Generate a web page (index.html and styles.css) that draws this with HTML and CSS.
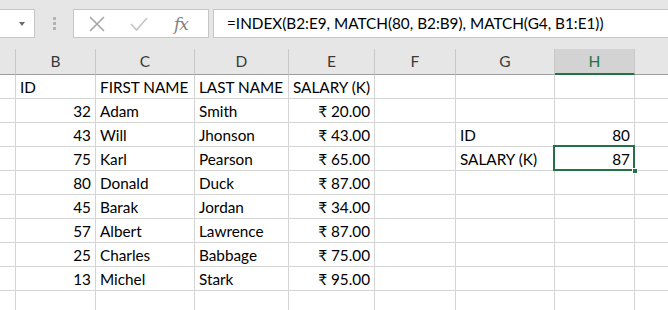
FILE: index.html
```html
<!DOCTYPE html>
<html>
<head>
<meta charset="utf-8">
<link rel="stylesheet" href="styles.css">
</head>
<body>
<div class="toolbar">
  <div class="namebox"><span class="arrow"></span></div>
  <div class="grip"><span></span><span></span><span></span></div>
  <div class="buttons">
    <svg class="ico" width="20" height="20" viewBox="0 0 20 20"><path d="M3 3 L17 17 M17 3 L3 17" stroke="#a6a6a6" stroke-width="1.6" fill="none"/></svg>
    <svg class="ico" width="20" height="20" viewBox="0 0 20 20"><path d="M2 10 L7.5 16 L18 4" stroke="#c4c4c4" stroke-width="1.6" fill="none"/></svg>
    <span class="fx">fx</span>
  </div>
  <div class="formula">=INDEX(B2:E9, MATCH(80, B2:B9), MATCH(G4, B1:E1))</div>
</div>
<div class="sheet">
  <div class="hd"></div><div class="hd">B</div><div class="hd">C</div><div class="hd">D</div><div class="hd">E</div><div class="hd">F</div><div class="hd">G</div><div class="hd sel">H</div><div class="hd last"></div>

  <div class="c"></div><div class="c">ID</div><div class="c">FIRST NAME</div><div class="c">LAST NAME</div><div class="c">SALARY (K)</div><div class="c"></div><div class="c"></div><div class="c"></div><div class="c last"></div>

  <div class="c"></div><div class="c r">32</div><div class="c">Adam</div><div class="c">Smith</div><div class="c r">₹ 20.00</div><div class="c"></div><div class="c"></div><div class="c"></div><div class="c last"></div>

  <div class="c"></div><div class="c r">43</div><div class="c">Will</div><div class="c">Jhonson</div><div class="c r">₹ 43.00</div><div class="c"></div><div class="c">ID</div><div class="c r">80</div><div class="c last"></div>

  <div class="c"></div><div class="c r">75</div><div class="c">Karl</div><div class="c">Pearson</div><div class="c r">₹ 65.00</div><div class="c"></div><div class="c">SALARY (K)</div><div class="c r active">87<span class="handle"></span></div><div class="c last"></div>

  <div class="c"></div><div class="c r">80</div><div class="c">Donald</div><div class="c">Duck</div><div class="c r">₹ 87.00</div><div class="c"></div><div class="c"></div><div class="c"></div><div class="c last"></div>

  <div class="c"></div><div class="c r">45</div><div class="c">Barak</div><div class="c">Jordan</div><div class="c r">₹ 34.00</div><div class="c"></div><div class="c"></div><div class="c"></div><div class="c last"></div>

  <div class="c"></div><div class="c r">57</div><div class="c">Albert</div><div class="c">Lawrence</div><div class="c r">₹ 87.00</div><div class="c"></div><div class="c"></div><div class="c"></div><div class="c last"></div>

  <div class="c"></div><div class="c r">25</div><div class="c">Charles</div><div class="c">Babbage</div><div class="c r">₹ 75.00</div><div class="c"></div><div class="c"></div><div class="c"></div><div class="c last"></div>

  <div class="c"></div><div class="c r">13</div><div class="c">Michel</div><div class="c">Stark</div><div class="c r">₹ 95.00</div><div class="c"></div><div class="c"></div><div class="c"></div><div class="c last"></div>

  <div class="c"></div><div class="c"></div><div class="c"></div><div class="c"></div><div class="c"></div><div class="c"></div><div class="c"></div><div class="c"></div><div class="c last"></div>
</div>
</body>
</html>
```
FILE: styles.css
```css
* { box-sizing: border-box; }
html, body { margin: 0; padding: 0; background: #ffffff; }
body {
  width: 668px;
  height: 310px;
  overflow: hidden;
  font-family: Lato, "Noto Sans", "DejaVu Sans", sans-serif;
  font-size: 15.3px;
  color: #000;
}
.toolbar {
  height: 50px;
  background: #e6e6e6;
  display: flex;
  align-items: flex-start;
  padding-top: 9px;
}
.namebox {
  width: 35px;
  height: 29px;
  background: #fff;
  border: 1px solid #c6c6c6;
  border-left: none;
  position: relative;
}
.arrow {
  position: absolute;
  left: 19px;
  top: 12px;
  width: 0; height: 0;
  border-left: 3.5px solid transparent;
  border-right: 3.5px solid transparent;
  border-top: 4px solid #6b6b6b;
}
.grip {
  width: 38px;
  height: 29px;
  display: flex;
  flex-direction: column;
  align-items: center;
  justify-content: center;
  gap: 2px;
}
.grip span {
  width: 3px; height: 3px; background: #b4b4b4;
}
.buttons {
  width: 136px;
  height: 29px;
  background: #fff;
  border: 1px solid #c6c6c6;
  display: flex;
  align-items: center;
  padding-left: 13px;
}
.ico { display: block; }
.buttons .ico + .ico { margin-left: 22px; }
.fx {
  margin-left: 25px;
  font-family: "DejaVu Serif", "Liberation Serif", serif;
  font-style: italic;
  font-size: 17px;
  color: #808080;
  letter-spacing: -1px;
}
.formula {
  margin-left: 4px;
  flex: 1;
  height: 29px;
  background: #fff;
  border: 1px solid #c6c6c6;
  border-right: none;
  padding-left: 13px;
  line-height: 26px;
  font-size: 15.3px;
  white-space: nowrap;
}
.sheet {
  display: grid;
  grid-template-columns: 16px 80px 99px 94px 86px 81px 99px 80px 33px;
  grid-template-rows: 25px repeat(10, 24px);
}
.hd {
  background: #e6e6e6;
  border-right: 1px solid #c8c8c8;
  border-bottom: 1px solid #9e9e9e;
  text-align: center;
  line-height: 23px;
  color: #3a3a3a;
  font-size: 15.5px;
  margin-top: -1px;
  padding-top: 1px;
}
.hd.sel {
  background: #d3d3d3;
  color: #217346;
  border-bottom: 2px solid #217346;
}
.c {
  border-right: 1px solid #d4d4d4;
  border-bottom: 1px solid #d4d4d4;
  padding: 0 4px;
  line-height: 24px;
  white-space: nowrap;
  overflow: visible;
}
.last { border-right: none; }
.r { text-align: right; }
.active { position: relative; }
.active::after {
  content: "";
  position: absolute;
  left: -2px; top: -2px; right: -1px; bottom: -1px;
  border: 2px solid #217346;
  pointer-events: none;
}
.handle {
  position: absolute;
  right: -4px;
  bottom: -4px;
  width: 6px;
  height: 6px;
  background: #217346;
  border: 1px solid #fff;
  z-index: 2;
}
```
